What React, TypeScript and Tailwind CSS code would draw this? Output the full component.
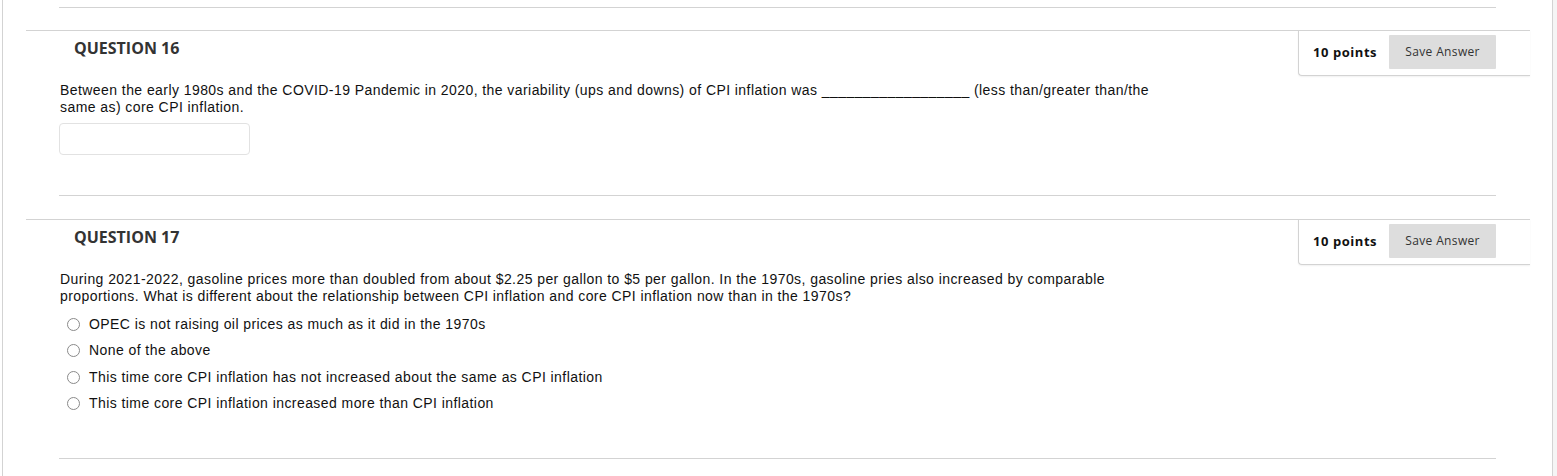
import React from "react";

const os = { fontFamily: '"Open Sans", "Noto Sans", sans-serif' };
const ar = { fontFamily: '"Liberation Sans", Arial, sans-serif' };

function Rule({ className = "" }: { className?: string }) {
  return <div className={`ml-[56px] w-[1437px] h-px bg-[#d3d3d3] ${className}`} />;
}

function Header({ n }: { n: number }) {
  return (
    <div className="ml-[23px] w-[1504px] h-[46px] border-t border-[#d3d3d3] flex justify-between">
      <div className="pl-[48px] pt-[6px] text-[16px] leading-[22px] font-bold text-[#333]" style={os}>
        QUESTION {n}
      </div>
      <div className="w-[232px] h-[46px] -mt-px border-l border-b border-t border-[#d3d3d3] rounded-bl-[4px] shadow-[0_1px_2px_rgba(0,0,0,0.06)] flex items-start pl-[14px] pt-[4px] bg-white">
        <span className="mt-[9px] text-[13px] font-bold text-[#111] leading-[16px] tracking-[0.55px]" style={os}>
          10 points
        </span>
        <button
          className="ml-[12px] w-[107px] h-[34px] bg-[#dddddd] text-[12px] text-[#333] rounded-[1px] flex items-center justify-center tracking-[0.35px]"
          style={os}
        >
          Save Answer
        </button>
      </div>
    </div>
  );
}

function Radio({ label }: { label: string }) {
  return (
    <div className="h-[26.5px] flex items-center pl-[7px]">
      <span className="w-[13px] h-[13px] rounded-full border border-[#8a8a8a] bg-white shrink-0" />
      <span className="ml-[9px] text-[14px] text-[#111] leading-[17px] tracking-[0.43px]" style={ar}>
        {label}
      </span>
    </div>
  );
}

export default function App() {
  return (
    <div className="w-[1557px] h-[476px] bg-white flex overflow-hidden">
      <div className="w-[2px] shrink-0" />
      <div className="w-[1551px] h-full shrink-0 border-l border-r border-[#d3d3d3] bg-white">
        <Rule className="mt-[7px]" />
        <div className="mt-[22px]">
          <Header n={16} />
        </div>
        <div
          className="ml-[57px] w-[1100px] mt-[6px] text-[14px] leading-[17px] text-[#111] tracking-[0.43px]"
          style={ar}
        >
          Between the early 1980s and the COVID-19 Pandemic in 2020, the variability (ups and downs) of CPI inflation was
          __________________ (less than/greater than/the same as) core CPI inflation.
        </div>
        <div className="ml-[56px] mt-[7px] w-[191px] h-[32px] border border-[#e2e2e2] rounded-[4px] bg-white" />
        <Rule className="mt-[40px]" />
        <div className="mt-[23px]">
          <Header n={17} />
        </div>
        <div
          className="ml-[57px] w-[1100px] mt-[6px] text-[14px] leading-[17px] text-[#111] tracking-[0.43px]"
          style={ar}
        >
          During 2021-2022, gasoline prices more than doubled from about $2.25 per gallon to $5 per gallon. In the 1970s,
          gasoline pries also increased by comparable proportions. What is different about the relationship between CPI
          inflation and core CPI inflation now than in the 1970s?
        </div>
        <div className="ml-[57px] mt-[6px]">
          <Radio label="OPEC is not raising oil prices as much as it did in the 1970s" />
          <Radio label="None of the above" />
          <Radio label="This time core CPI inflation has not increased about the same as CPI inflation" />
          <Radio label="This time core CPI inflation increased more than CPI inflation" />
        </div>
        <Rule className="mt-[41px]" />
      </div>
      <div className="flex-1 bg-[#f5f5f5]" />
    </div>
  );
}
